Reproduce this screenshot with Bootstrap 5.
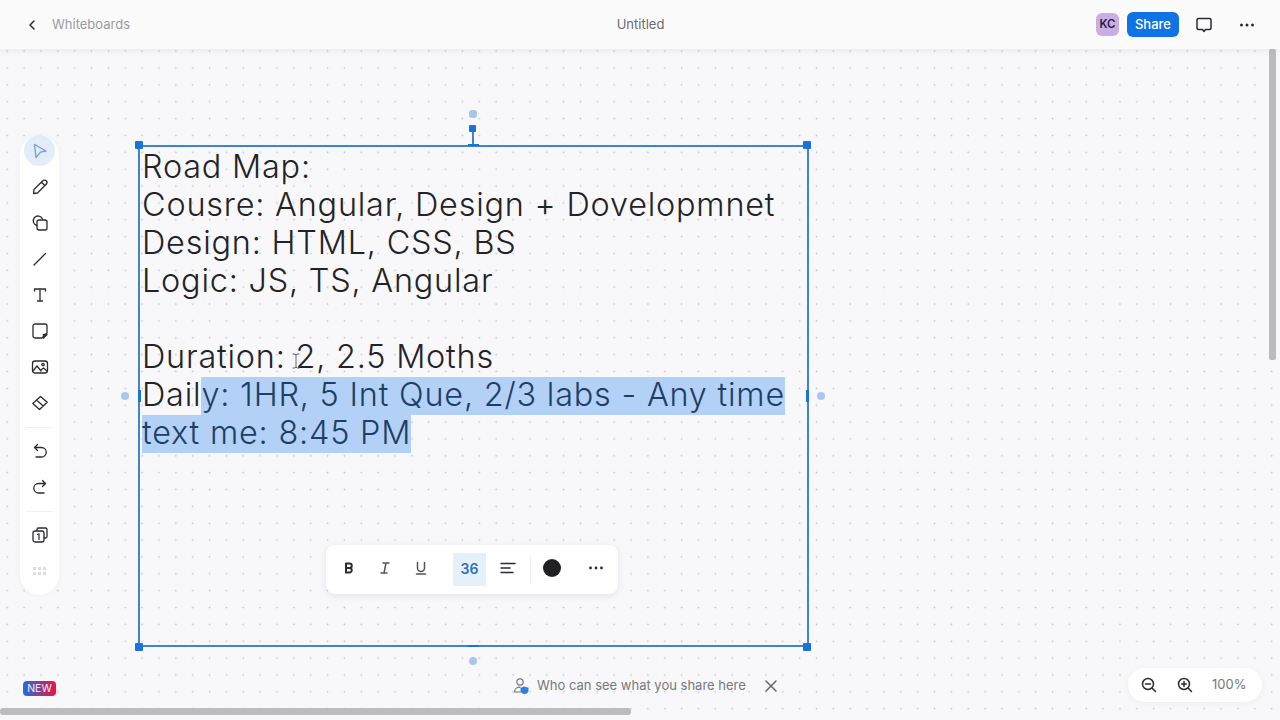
<!DOCTYPE html>
<html lang="en">
<head>
<meta charset="UTF-8">
<title>Untitled - Whiteboards</title>
<link href="https://cdn.jsdelivr.net/npm/bootstrap@5.3.2/dist/css/bootstrap.min.css" rel="stylesheet">
<style>
    html, body { height: 100%; margin: 0; overflow: hidden; }
    body { font-family: Inter, "Liberation Sans", sans-serif; background: #f8f8fb; }
    svg { display: block; fill: none; stroke: #2b2b30; stroke-width: 1.5; stroke-linecap: round; stroke-linejoin: round; }

    .topbar { height: 49px; padding: 0 25px 0 26px; background: #fbfbfc; box-shadow: 0 2px 6px rgba(60, 60, 70, .08); position: relative; z-index: 2; }
    .topbar-side { width: 300px; }
    .crumb { font-size: 13px; color: #9a9a9f; margin-left: 14px; }
    .doc-title { font-size: 13px; color: #6b6b70; padding-top: 1px; }
    .avatar { width: 23px; height: 23px; border-radius: 6px; background: #c9aee3; color: #2c1a45; font-size: 11.5px; font-weight: 600; }
    .share-btn { width: 52px; height: 25px; padding: 0; border: 0; border-radius: 6px; background: #0f73e6; color: #fff; font-size: 13px; font-weight: 500; margin-left: 8px; margin-right: 16px; }
    .top-more { margin-left: 26px; }

    .board {
        position: relative; height: 671px;
        background-color: #f8f8fb;
        background-image: radial-gradient(circle, #c4c5ca .8px, transparent 1.1px);
        background-size: 16.87px 16.87px;
        background-position: -1.2px 10.6px;
    }

    .tools { position: absolute; left: 20px; top: 86px; width: 39px; height: 460px; background: #fff; border-radius: 20px; box-shadow: 0 0 5px rgba(60, 60, 80, .05); }
    .tools svg { stroke-width: 1.3; }
    .tool { width: 39px; height: 36px; flex: none; }
    .tool-first { margin-top: -2px; }
    .tool.active { position: relative; }
    .tool.active::before { content: ""; position: absolute; left: 4px; top: 2px; width: 31px; height: 31px; border-radius: 50%; background: #e2edf9; }
    .tool.active svg { position: relative; stroke: #6f9fdc; }
    .tool-sep { width: 27px; height: 1px; margin: 5.5px 6px; background: #f0f0f2; flex: none; }
    .grip { width: 14px; display: grid; grid-template-columns: repeat(3, 3px); gap: 2px; }
    .grip i { height: 3px; background: #dcdde0; display: block; }

    .textbox { position: absolute; left: 138px; top: 96px; width: 671px; height: 502px; border: 2px solid #3f85cc; padding: 1px 0 0 2px; font-size: 32.4px; font-weight: 300; line-height: 38px; letter-spacing: .8px; color: #232327; white-space: nowrap; }
    .textbox div { height: 38px; }
    /* highlight sits 1px below the line box, as in the editor */
    .sel { display: inline-block; padding-bottom: 1px; background: linear-gradient(#b3d1f6, #b3d1f6) 0 1px / 100% 38px no-repeat; color: #1d3f66; }

    .handle { position: absolute; width: 8px; height: 8px; background: #1a72dc; border-radius: 1px; }
    .dot { position: absolute; width: 8px; height: 8px; border-radius: 50%; background: #a9c6f0; }
    .stick { position: absolute; background: #3f85cc; }

    .ibeam { position: absolute; left: 291px; top: 304px; }

    .format-bar { position: absolute; left: 326px; top: 496px; width: 292px; height: 49px; background: #fff; border-radius: 9px; box-shadow: 0 2px 7px rgba(60, 60, 80, .1); padding-left: 13px; }
    .fmt { width: 20px; height: 33px; flex: none; padding-bottom: 3px; }
    .fmt-size { width: 33px; height: 33px; margin-left: 22px; padding-bottom: 2px; background: #e5f0fb; color: #2a70bf; font-size: 14px; font-weight: 600; }
    .fmt-sep { width: 1px; height: 30px; background: #f2f2f4; margin: 0 12px 0 12px; }
    .color-dot { width: 18px; height: 18px; border-radius: 50%; background: #212124; flex: none; margin-top: -3px; }

    .new-badge { position: absolute; left: 23px; top: 632px; width: 33px; height: 15px; border-radius: 4px; background: linear-gradient(90deg, #1f6fd6, #ec1240); color: #eef; font-size: 10.5px; line-height: 15px; text-align: center; }
    .share-hint { position: absolute; left: 513px; top: 627px; gap: 7px; font-size: 13px; color: #77777c; }
    .share-hint .close-x { margin-left: 11px; }
    .zoom-bar { position: absolute; left: 1128px; top: 619px; width: 134px; height: 34px; border-radius: 17px; background: #fff; box-shadow: 0 1px 6px rgba(60, 60, 80, .06); padding-left: 13px; gap: 20px; font-size: 13px; color: #77777c; }
    .zoom-bar span { margin-left: -1px; }

    .scroll-y { position: absolute; left: 1269px; top: 0; width: 7px; height: 311px; background: #bcbcbf; border-radius: 2px; }
    .scroll-x { position: absolute; left: 0; top: 659px; width: 631px; height: 7px; background: #bcbcbf; border-radius: 3px; }
</style>
</head>
<body>
    <header class="topbar d-flex align-items-center justify-content-between">
        <div class="topbar-side d-flex align-items-center">
            <svg width="12" height="12" viewBox="0 0 12 12"><path d="M8 2 4 6l4 4"/></svg>
            <span class="crumb">Whiteboards</span>
        </div>
        <div class="doc-title">Untitled</div>
        <div class="topbar-side d-flex align-items-center justify-content-end">
            <div class="avatar d-flex align-items-center justify-content-center">KC</div>
            <button class="btn share-btn" type="button">Share</button>
            <svg width="18" height="18" viewBox="0 0 18 18"><path d="M3.500 2.500h11a1.500 1.500 0 0 1 1.500 1.500v8a1.500 1.500 0 0 1-1.500 1.500h-4L9 15.500 7.500 13.500h-4A1.500 1.500 0 0 1 2 12V4a1.500 1.500 0 0 1 1.500-1.500Z"/></svg>
            <svg class="top-more" width="16" height="16" viewBox="0 0 16 16"><g fill="#2b2b30" stroke="none"><circle cx="2.500" cy="8" r="1.500"/><circle cx="8" cy="8" r="1.500"/><circle cx="13.500" cy="8" r="1.500"/></g></svg>
        </div>
    </header>

    <main class="board">
        <!-- left tool rail -->
        <nav class="tools d-flex flex-column align-items-center">
            <div class="tool tool-first active d-flex align-items-center justify-content-center">
                <svg width="18" height="18" viewBox="0 0 18 18"><path d="M3.500 2.500 15 9l-5.500 1.200L5 15.500Z"/></svg>
            </div>
            <div class="tool d-flex align-items-center justify-content-center">
                <svg width="18" height="18" viewBox="0 0 18 18"><path d="M2.500 15.500 3 11.500 11.800 2.800a1.800 1.800 0 0 1 3.400 3.400L6.500 15ZM10.500 4.200l3.300 3.300"/></svg>
            </div>
            <div class="tool d-flex align-items-center justify-content-center">
                <svg width="18" height="18" viewBox="0 0 18 18"><path d="M6 11.500a4.800 4.800 0 1 1 5.500-6.500"/><rect x="6" y="6" width="10" height="10" rx="2"/></svg>
            </div>
            <div class="tool d-flex align-items-center justify-content-center">
                <svg width="18" height="18" viewBox="0 0 18 18"><path d="M3 15 14.500 3.500"/></svg>
            </div>
            <div class="tool d-flex align-items-center justify-content-center">
                <svg width="18" height="18" viewBox="0 0 18 18"><path d="M3.500 5V3h11v2M9 3v12M6.500 15h5"/></svg>
            </div>
            <div class="tool d-flex align-items-center justify-content-center">
                <svg width="18" height="18" viewBox="0 0 18 18"><path d="M11 16H4a2 2 0 0 1-2-2V4a2 2 0 0 1 2-2h10a2 2 0 0 1 2 2v7Z"/><path d="M16 12.500 12.500 16v-3.500Z" fill="#2b2b30"/></svg>
            </div>
            <div class="tool d-flex align-items-center justify-content-center">
                <svg width="18" height="18" viewBox="0 0 18 18"><rect x="1.500" y="3" width="15" height="12" rx="2.500"/><circle cx="12" cy="6.500" r="1.200"/><path d="M2 13l4-5 4 5M10 12l2.500-2 3.500 3"/></svg>
            </div>
            <div class="tool d-flex align-items-center justify-content-center">
                <svg width="18" height="18" viewBox="0 0 18 18"><path d="M1.800 9.500 9.500 2.500l6.700 5.800-7.700 7.200ZM5.500 6l6.700 6"/></svg>
            </div>
            <div class="tool-sep"></div>
            <div class="tool d-flex align-items-center justify-content-center">
                <svg width="18" height="18" viewBox="0 0 18 18"><path d="M6.500 2.500 3.500 5.500l3 3M3.500 5.500h7a4 4 0 0 1 0 9.500H5"/></svg>
            </div>
            <div class="tool d-flex align-items-center justify-content-center">
                <svg width="18" height="18" viewBox="0 0 18 18"><path d="M11.500 2.500l3 3-3 3M14.500 5.500h-7a4 4 0 0 0 0 9.500H13"/></svg>
            </div>
            <div class="tool-sep"></div>
            <div class="tool d-flex align-items-center justify-content-center">
                <svg width="18" height="18" viewBox="0 0 18 18"><path d="M6 4.500V3.500A1.500 1.500 0 0 1 7.500 2h7A1.500 1.500 0 0 1 16 3.500v7a1.500 1.500 0 0 1-1.500 1.500H13"/><rect x="2" y="5" width="11" height="11" rx="2"/><path d="M6.500 8.500 8 7.800v5.700" stroke-width="1.200"/></svg>
            </div>
            <div class="tool d-flex align-items-center justify-content-center">
                <div class="grip"><i></i><i></i><i></i><i></i><i></i><i></i></div>
            </div>
        </nav>

        <!-- selected text box with its handles -->
        <div class="textbox">
            <div>Road Map:</div>
            <div>Cousre: Angular, Design + Dovelopmnet</div>
            <div>Design: HTML, CSS, BS</div>
            <div>Logic: JS, TS, Angular</div>
            <div></div>
            <div>Duration: 2, 2.5 Moths</div>
            <div>Dail<span class="sel">y: 1HR, 5 Int Que, 2/3 labs - Any time</span></div>
            <div><span class="sel">text me: 8:45 PM</span></div>
        </div>
        <span class="handle" style="left:135px;top:92px"></span>
        <span class="handle" style="left:803px;top:92px"></span>
        <span class="handle" style="left:135px;top:594px"></span>
        <span class="handle" style="left:803px;top:594px"></span>
        <span class="stick" style="left:472px;top:82px;width:2px;height:15px"></span>
        <span class="stick" style="left:468px;top:95px;width:11px;height:2px;background:#1a72dc"></span>
        <span class="handle" style="left:469px;top:76px;width:7px;height:7px"></span>
        <span class="dot" style="left:469px;top:61px;border-radius:3px"></span>
        <span class="stick" style="left:468px;top:596px;width:11px;height:2px;background:#1a72dc"></span>
        <span class="dot" style="left:469px;top:608px"></span>
        <span class="dot" style="left:121px;top:343px"></span>
        <span class="stick" style="left:138px;top:341px;width:3px;height:12px;background:#1a72dc"></span>
        <span class="stick" style="left:806px;top:341px;width:3px;height:12px;background:#1a72dc"></span>
        <span class="dot" style="left:817px;top:343px"></span>

        <svg class="ibeam" width="10" height="16" viewBox="0 0 10 16"><path d="M2 1h2l1 1 1-1h2M5 2v12M2 15h2l1-1 1 1h2" stroke="#66666c" stroke-width="1"/></svg>

        <!-- text format bar -->
        <div class="format-bar d-flex align-items-center">
            <div class="fmt d-flex align-items-center justify-content-center" style="margin-right:16px">
                <svg width="14" height="14" viewBox="0 0 14 14"><path d="M4 2.500v9M4 2.500h3.500a2.200 2.200 0 0 1 0 4.500H4M4 7h4a2.300 2.300 0 0 1 0 4.500H4" stroke-width="2"/></svg>
            </div>
            <div class="fmt d-flex align-items-center justify-content-center" style="margin-right:16px">
                <svg width="14" height="14" viewBox="0 0 14 14"><path d="M5 2h6M3 12h6M8 2 6 12" stroke="#55555a"/></svg>
            </div>
            <div class="fmt d-flex align-items-center justify-content-center">
                <svg width="14" height="14" viewBox="0 0 14 14"><path d="M3.500 1.500v5.500a3.500 3.500 0 0 0 7 0V1.500M2.500 13h9" stroke="#55555a"/></svg>
            </div>
            <div class="fmt-size d-flex align-items-center justify-content-center">36</div>
            <div class="fmt d-flex align-items-center justify-content-center" style="margin-left:12px">
                <svg width="16" height="14" viewBox="0 0 16 14"><path d="M1 2.500h14M1 7h9M1 11.500h12"/></svg>
            </div>
            <div class="fmt-sep"></div>
            <div class="color-dot"></div>
            <div class="fmt d-flex align-items-center justify-content-center" style="margin-left:25px">
                <svg width="16" height="14" viewBox="0 0 16 14"><g fill="#2b2b30" stroke="none"><circle cx="2.500" cy="7" r="1.400"/><circle cx="8" cy="7" r="1.400"/><circle cx="13.500" cy="7" r="1.400"/></g></svg>
            </div>
        </div>

        <span class="new-badge">NEW</span>

        <div class="share-hint d-flex align-items-center">
            <svg width="17" height="18" viewBox="0 0 17 18"><circle cx="7" cy="5" r="3.200" stroke="#77777c" stroke-width="1.200"/><path d="M1.500 15c0-3 2.500-4.800 5.500-4.800M1.500 15h6" stroke="#77777c" stroke-width="1.200"/><path d="M11.500 9.500l4 1.200v3c0 1.800-2 3-4 3.500-2-.5-4-1.700-4-3.500v-3Z" fill="#2f7fe0" stroke="none"/></svg>
            <span>Who can see what you share here</span>
            <svg class="close-x" width="14" height="14" viewBox="0 0 14 14"><path d="M2 2l10 10M12 2 2 12" stroke="#66666c"/></svg>
        </div>

        <div class="zoom-bar d-flex align-items-center">
            <svg width="16" height="16" viewBox="0 0 16 16"><circle cx="7" cy="7" r="5.500"/><path d="M11 11l3.500 3.500M4.500 7h5"/></svg>
            <svg width="16" height="16" viewBox="0 0 16 16"><circle cx="7" cy="7" r="5.500"/><path d="M11 11l3.500 3.500M4.500 7h5M7 4.500v5"/></svg>
            <span>100%</span>
        </div>

        <div class="scroll-y"></div>
        <div class="scroll-x"></div>
    </main>

    <script src="https://cdn.jsdelivr.net/npm/bootstrap@5.3.2/dist/js/bootstrap.bundle.min.js"></script>
</body>
</html>
